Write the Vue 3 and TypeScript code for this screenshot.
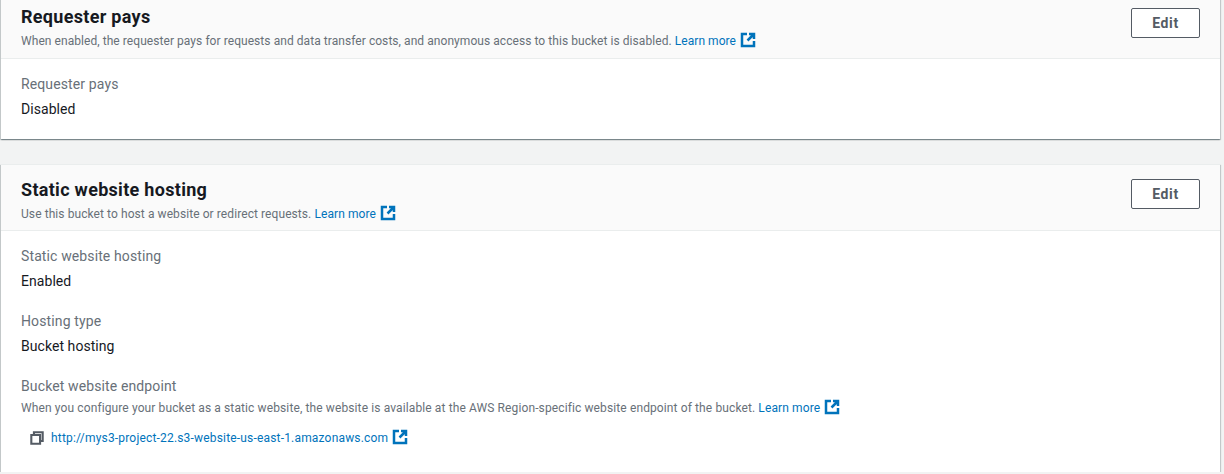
<script setup lang="ts">
interface Field { label: string; value: string }
const fields: Field[] = [
  { label: 'Static website hosting', value: 'Enabled' },
  { label: 'Hosting type', value: 'Bucket hosting' },
]
</script>

<template>
  <div class="page">
    <section class="card first">
      <header class="head">
        <div>
          <h2>Requester pays</h2>
          <p class="desc">When enabled, the requester pays for requests and data transfer costs, and anonymous access to this bucket is disabled. <a class="link">Learn more<svg class="ext" viewBox="0 0 16 16"><path d="M7 2H2v12h12V9M9 2h5v5M14 2 7.500 8.500" /></svg></a></p>
        </div>
        <button class="edit">Edit</button>
      </header>
      <div class="body">
        <div class="field">
          <div class="label">Requester pays</div>
          <div class="value">Disabled</div>
        </div>
      </div>
    </section>

    <section class="card">
      <header class="head">
        <div>
          <h2>Static website hosting</h2>
          <p class="desc short">Use this bucket to host a website or redirect requests. <a class="link">Learn more<svg class="ext" viewBox="0 0 16 16"><path d="M7 2H2v12h12V9M9 2h5v5M14 2 7.500 8.500" /></svg></a></p>
        </div>
        <button class="edit">Edit</button>
      </header>
      <div class="body">
        <div v-for="f in fields" :key="f.label" class="field">
          <div class="label">{{ f.label }}</div>
          <div class="value">{{ f.value }}</div>
        </div>
        <div class="field">
          <div class="label">Bucket website endpoint</div>
          <p class="desc long">When you configure your bucket as a static website, the website is available at the AWS Region-specific website endpoint of the bucket. <a class="link">Learn more<svg class="ext" viewBox="0 0 16 16"><path d="M7 2H2v12h12V9M9 2h5v5M14 2 7.500 8.500" /></svg></a></p>
          <div class="endpoint">
            <svg class="copy" viewBox="0 0 16 16"><path d="M4.500 4V1.500H14.500V11.500H12M1.500 4.500H11.500V14.500H1.500Z" /></svg>
            <a class="link">http://mys3-project-22.s3-website-us-east-1.amazonaws.com<svg class="ext" viewBox="0 0 16 16"><path d="M7 2H2v12h12V9M9 2h5v5M14 2 7.500 8.500" /></svg></a>
          </div>
        </div>
      </div>
    </section>
  </div>
</template>

<style>
html, body { margin: 0; background: #f2f3f3; overflow: hidden; }
</style>

<style scoped>
.page {
  margin-top: -9px;
  padding: 0 4px 0 1px;
  display: flex;
  flex-direction: column;
  gap: 25px;
  font-family: Roboto, "Noto Sans", sans-serif;
  color: #16191f;
}
.card {
  background: #fff;
  box-shadow: 0 1px 1px 0 rgba(0, 28, 36, 0.3), 1px 1px 1px 0 rgba(0, 28, 36, 0.15), -1px 1px 1px 0 rgba(0, 28, 36, 0.15);
  border-top: 1px solid #eaeded;
}
.head {
  height: 66px;
  box-sizing: border-box;
  background: #fafafa;
  border-bottom: 1px solid #eaeded;
  padding: 14px 20px 0 20px;
  display: flex;
  justify-content: space-between;
  align-items: flex-start;
}
.first .head { height: 67px; }
.first .edit { margin-top: 2px; }
h2 {
  margin: 0;
  font-size: 18px;
  line-height: 22px;
  font-weight: 700;
  letter-spacing: 0.3px;
}
.desc {
  margin: 4px 0 0;
  font-size: 12px;
  line-height: 16px;
  color: #687078;
  letter-spacing: 0.06px;
}
.desc.short { letter-spacing: 0.08px; }
.desc.long { letter-spacing: 0.115px; }
.link { color: #0073bb; }
.ext {
  width: 16px;
  height: 16px;
  margin-left: 4px;
  vertical-align: -3px;
  fill: none;
  stroke: #0073bb;
  stroke-width: 2.5;
}
.edit {
  width: 69px;
  height: 30px;
  box-sizing: border-box;
  background: #fff;
  border: 1px solid #545b64;
  border-radius: 2px;
  color: #545b64;
  font: 700 14px/20px Roboto, sans-serif;
  letter-spacing: 0.6px;
  padding: 0;
}
.body {
  padding: 15px 20px 24px;
  display: flex;
  flex-direction: column;
  gap: 20px;
}
.first .body { box-sizing: border-box; height: 80px; padding-bottom: 0; }
.label {
  font-size: 14px;
  line-height: 20px;
  color: #687078;
  letter-spacing: 0.12px;
}
.value {
  margin-top: 5px;
  font-size: 14px;
  line-height: 20px;
  letter-spacing: 0.06px;
}
.field .desc { margin-top: 3px; }
.endpoint {
  margin-top: 12px;
  padding-left: 9px;
  display: flex;
  align-items: center;
  gap: 7px;
  font-size: 12px;
  line-height: 20px;
  letter-spacing: 0.18px;
}
.copy {
  width: 14px;
  height: 14px;
  fill: none;
  stroke: #545b64;
  stroke-width: 2.4;
}
</style>
